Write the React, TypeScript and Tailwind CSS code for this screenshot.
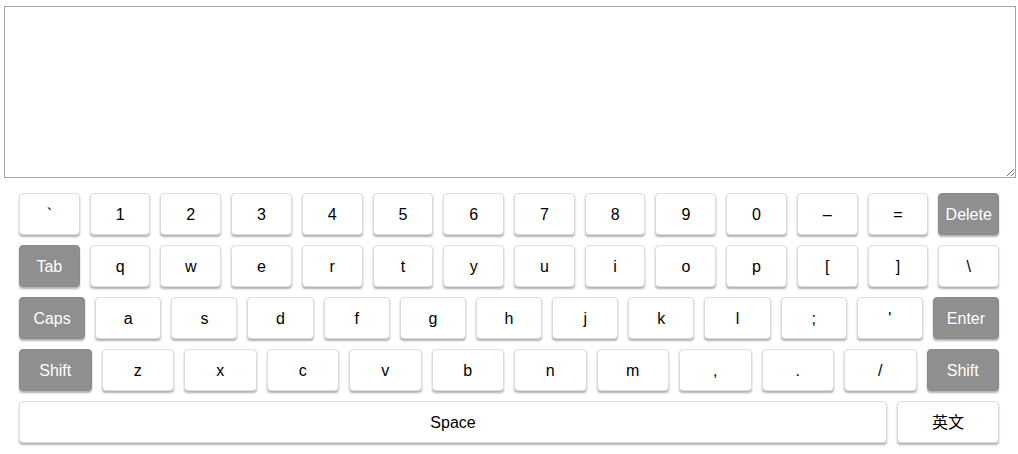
import React from 'react'

const rows: { label: string; dark?: boolean }[][] = [
  [
    { label: '`' }, { label: '1' }, { label: '2' }, { label: '3' }, { label: '4' }, { label: '5' }, { label: '6' },
    { label: '7' }, { label: '8' }, { label: '9' }, { label: '0' }, { label: '–' }, { label: '=' },
    { label: 'Delete', dark: true },
  ],
  [
    { label: 'Tab', dark: true }, { label: 'q' }, { label: 'w' }, { label: 'e' }, { label: 'r' }, { label: 't' },
    { label: 'y' }, { label: 'u' }, { label: 'i' }, { label: 'o' }, { label: 'p' }, { label: '[' }, { label: ']' },
    { label: '\\' },
  ],
  [
    { label: 'Caps', dark: true }, { label: 'a' }, { label: 's' }, { label: 'd' }, { label: 'f' }, { label: 'g' },
    { label: 'h' }, { label: 'j' }, { label: 'k' }, { label: 'l' }, { label: ';' }, { label: "'" },
    { label: 'Enter', dark: true },
  ],
  [
    { label: 'Shift', dark: true }, { label: 'z' }, { label: 'x' }, { label: 'c' }, { label: 'v' }, { label: 'b' },
    { label: 'n' }, { label: 'm' }, { label: ',' }, { label: '.' }, { label: '/' },
    { label: 'Shift', dark: true },
  ],
]

function Key({ label, dark, className = 'flex-1' }: { label: string; dark?: boolean; className?: string }) {
  return (
    <button
      className={`${className} m-[5px] h-[42px] pt-[2px] rounded-[4px] border text-[16px] flex items-center justify-center shadow-[0_2px_2px_rgba(0,0,0,0.3)] ${
        dark ? 'bg-[#8f8f8f] border-[#8a8a8a] text-white' : 'bg-white border-[#dcdcdc] text-black'
      }`}
    >
      {label}
    </button>
  )
}

export default function App() {
  return (
    <main className="w-[1018px] h-[454px] bg-white overflow-hidden" style={{ fontFamily: '"Liberation Sans", "Noto Sans CJK SC", sans-serif' }}>
      <textarea className="block ml-[4px] mt-[6px] w-[1012px] h-[172px] border border-[#a3a3a3] outline-none resize" />

      <div className="px-[14px] pt-[10px]">
        {rows.map((row, i) => (
          <div key={i} className="flex">
            {row.map((k, j) => (
              <Key key={j} label={k.label} dark={k.dark} />
            ))}
          </div>
        ))}
        <div className="flex">
          <Key label="Space" />
          <Key label="英文" className="w-[102px] shrink-0" />
        </div>
      </div>
    </main>
  )
}
